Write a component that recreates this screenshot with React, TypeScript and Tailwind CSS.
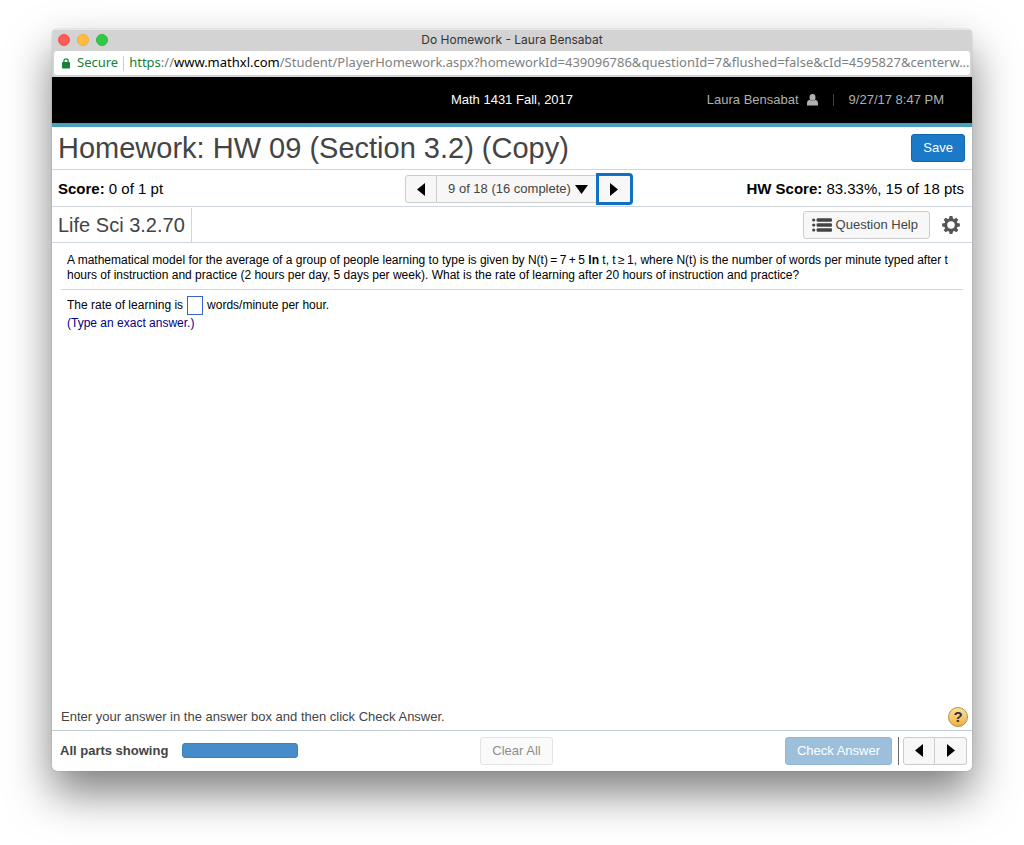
import type { ReactNode } from "react";

function Triangle({ dir, className = "" }: { dir: "left" | "right" | "down"; className?: string }) {
  const points = {
    left: "8,0 8,13 0,6.5",
    right: "0,0 0,13 8,6.5",
    down: "0,0 13,0 6.5,9",
  }[dir];
  const w = dir === "down" ? 13 : 8;
  const h = dir === "down" ? 9 : 13;
  return (
    <svg width={w} height={h} viewBox={`0 0 ${w} ${h}`} className={className} aria-hidden="true">
      <polygon points={points} fill="#000" />
    </svg>
  );
}

function LockIcon() {
  return (
    <svg width="8" height="11" viewBox="0 0 8 11" className="shrink-0" aria-hidden="true">
      <rect x="0" y="4" width="8" height="6.6" rx="0.8" fill="#188038" />
      <path d="M1.9 4.5V2.9a2.1 2.1 0 0 1 4.2 0v1.6" fill="none" stroke="#188038" strokeWidth="1.3" />
    </svg>
  );
}

function UserIcon() {
  return (
    <svg width="11" height="12" viewBox="0 0 11 12" aria-hidden="true">
      <ellipse cx="5.5" cy="3.4" rx="3" ry="3.4" fill="#b0b0b0" />
      <path d="M0 11.6V9.2C0 7.2 1.2 6 2.6 5.700c1.600 1.700 4.200 1.700 5.800 0C9.800 6 11 7.200 11 9.200v2.400z" fill="#b0b0b0" />
    </svg>
  );
}

function ListIcon() {
  return (
    <svg width="20" height="14" viewBox="0 0 20 14" aria-hidden="true" fill="#444">
      {[2, 7, 12].map((y) => (
        <g key={y}>
          <circle cx="1.7" cy={y} r="1.6" />
          <rect x="4.600" y={y - 1.7} width="15.400" height="3.400" rx="1.200" />
        </g>
      ))}
    </svg>
  );
}

function GearIcon() {
  return (
    <svg width="18" height="18" viewBox="-9 -9 18 18" aria-hidden="true">
      <circle r="5.200" fill="none" stroke="#555" strokeWidth="2.900" />
      {[0, 45, 90, 135, 180, 225, 270, 315].map((a) => (
        <path key={a} d="M-2.100 -6 L-1.400 -8.900 H1.400 L2.100 -6 Z" fill="#555" transform={`rotate(${a})`} />
      ))}
    </svg>
  );
}

function Row({ children, className = "" }: { children: ReactNode; className?: string }) {
  return <div className={`flex items-center border-b border-[#cfd6e0] ${className}`}>{children}</div>;
}

export default function App() {
  return (
    <div className="flex min-h-screen flex-col bg-white px-[52px] pt-[29px] pb-[74px] font-['Liberation_Sans',Arial,sans-serif] text-black">
      <div className="flex flex-1 flex-col overflow-hidden rounded-[5px] bg-white shadow-[0_0_1px_rgba(0,0,0,0.45),0_22px_44px_rgba(0,0,0,0.5)]">
        <div className="bg-[#d3d3d3] pb-[2px]">
          <div className="grid h-[22px] grid-cols-[1fr_auto_1fr] items-center border-t border-[#e6e6e6] px-[6px] pb-px">
            <div className="flex gap-[7px]">
              <span className="size-3 rounded-full border border-[#f0544f] bg-[#fc5b57]" />
              <span className="size-3 rounded-full border border-[#efae38] bg-[#fdbc40]" />
              <span className="size-3 rounded-full border border-[#2ebb42] bg-[#33c748]" />
            </div>
            <div className="font-[Inter,sans-serif] text-[12px] text-[#333]">Do Homework - Laura Bensabat</div>
          </div>
          <div className="mx-[2px] flex h-6 items-center rounded-[3px] bg-white pl-2 font-['Noto_Sans',sans-serif] text-[13px] whitespace-nowrap">
            <LockIcon />
            <span className="ml-[7px] text-[#188038]">Secure</span>
            <span className="mx-[5px] h-[15px] w-px bg-[#ccc]" />
            <span className="text-[#808080]">
              <span className="text-[#188038]">https</span>://<span className="text-black">www.mathxl.com</span>
              /Student/PlayerHomework.aspx?homeworkId=439096786&amp;questionId=7&amp;flushed=false&amp;cId=4595827&amp;centerw...
            </span>
          </div>
        </div>

        <header className="grid h-[50px] grid-cols-[1fr_auto_1fr] items-center border-b-4 border-[#489fbf] bg-black px-7 text-[13px]">
          <div />
          <div className="text-white">Math 1431 Fall, 2017</div>
          <div className="flex items-center justify-end text-[#b0b0b0]">
            <span>Laura Bensabat</span>
            <span className="ml-2">
              <UserIcon />
            </span>
            <span className="mx-[15px] h-3 w-px bg-[#444]" />
            <span>9/27/17 8:47 PM</span>
          </div>
        </header>

        <Row className="h-[43px] justify-between pr-[7px] pb-px pl-[6px]">
          <h1 className="text-[29px] leading-9 text-[#444]">Homework: HW 09 (Section 3.2) (Copy)</h1>
          <button className="h-7 rounded-[3px] border border-[#1268b0] bg-[#1b7ac8] px-[11px] text-[13px] text-white">Save</button>
        </Row>

        <div className="grid h-[37px] grid-cols-[1fr_auto_1fr] items-center border-b border-[#cfd6e0] pt-[2px] pr-2 pl-[6px] text-[15px]">
          <div>
            <b>Score:</b> 0 of 1 pt
          </div>
          <div className="ml-4 flex items-center">
            <button aria-label="Previous question" className="flex h-7 w-8 items-center justify-center rounded-l-[3px] border border-[#ccc] bg-[#f7f7f7]">
              <Triangle dir="left" />
            </button>
            <button className="flex h-7 items-center gap-1 border-y border-[#ccc] bg-[#f7f7f7] pr-2 pl-[11px] text-[13px] text-[#444]">
              9 of 18 (16 complete)
              <Triangle dir="down" />
            </button>
            <button aria-label="Next question" className="flex h-8 w-[37px] items-center justify-center rounded-r-[4px] border-[3px] border-[#1070c4] bg-[#f7f7f7]">
              <Triangle dir="right" />
            </button>
          </div>
          <div className="text-right">
            <b>HW Score:</b> 83.33%, 15 of 18 pts
          </div>
        </div>

        <Row className="h-9 justify-between pr-3 pl-[6px]">
          <h2 className="flex h-[34px] items-center border-r border-[#cfd6e0] pr-[6px] text-[20px] text-[#444]">Life Sci 3.2.70</h2>
          <div className="flex items-center gap-3">
            <button className="flex h-7 items-center gap-1 rounded-[3px] border border-[#ccc] bg-[#f7f7f7] pr-[11px] pl-2 text-[13px] text-[#444]">
              <ListIcon />
              Question Help
            </button>
            <button aria-label="Settings">
              <GearIcon />
            </button>
          </div>
        </Row>

        <main className="flex-1 px-[9px] pt-[10px] text-[12px] leading-[15px]">
          <p className="border-b border-[#cfd6e0] pb-[6px] pl-[6px]">
            A mathematical model for the average of a group of people learning to type is given by N(t){"\u2009=\u2009"}7{"\u2009"}+{"\u2009"}5{" "}
            <b>ln</b> t, t{"\u2009"}≥{"\u2009"}1, where N(t) is the number of words per minute typed after t
            <br />
            hours of instruction and practice (2 hours per day, 5 days per week). What is the rate of learning after 20 hours of instruction and practice?
          </p>
          <div className="flex items-center gap-1 pt-[6px] pl-[6px]">
            <label htmlFor="answer">The rate of learning is</label>
            <input id="answer" className="h-[19px] w-4 border border-[#3366cc] bg-white" />
            <span>words/minute per hour.</span>
          </div>
          <p className="pt-px pl-[6px] text-[#000080]">(Type an exact answer.)</p>
        </main>

        <div className="flex h-[26px] items-center justify-between pr-1 pl-[9px] text-[13px] text-[#444]">
          <p>Enter your answer in the answer box and then click Check Answer.</p>
          <button aria-label="Help" className="flex size-5 items-center justify-center rounded-full border border-[#b0904a] bg-linear-to-b from-[#fbe09a] to-[#f0b040] text-[15px] font-bold text-[#333]">
            ?
          </button>
        </div>

        <footer className="grid h-[41px] grid-cols-[1fr_auto_1fr] items-center border-t border-[#c3cedb] pr-[5px] pb-px pl-2 text-[13px]">
          <div className="flex items-center gap-[14px] font-bold text-[#444]">
            <span>All parts showing</span>
            <span className="h-[15px] w-[116px] rounded-[3px] border border-[#3c80bd] bg-[#468cc8]" />
          </div>
          <button className="ml-[6px] h-7 rounded-[3px] border border-[#e3e3e3] bg-[#fafafa] px-[11px] text-[#8c8c8c]">Clear All</button>
          <div className="flex items-center justify-end">
            <button className="h-7 rounded-[3px] border border-[#92b8d6] bg-[#9dbfdb] px-[11px] text-[13px] text-white">Check Answer</button>
            <span className="mr-1 ml-[6px] h-7 w-px bg-[#666]" />
            <button aria-label="Previous part" className="flex h-7 w-8 items-center justify-center rounded-l-[3px] border border-[#ccc] bg-[#f7f7f7]">
              <Triangle dir="left" />
            </button>
            <button aria-label="Next part" className="flex h-7 w-8 items-center justify-center rounded-r-[3px] border border-l-0 border-[#ccc] bg-[#f7f7f7]">
              <Triangle dir="right" />
            </button>
          </div>
        </footer>
      </div>
    </div>
  );
}
